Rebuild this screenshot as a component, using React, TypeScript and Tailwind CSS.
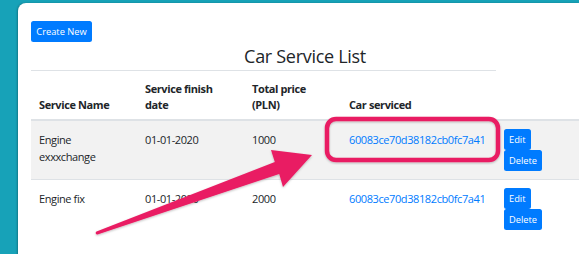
import React from "react";

const Btn = ({ children, className = "" }: { children: React.ReactNode; className?: string }) => (
  <button
    className={
      "block h-[21px] px-[5px] bg-[#007bff] text-white text-[9.3px] leading-[21px] rounded-[2.5px] " +
      className
    }
  >
    {children}
  </button>
);

const rows = [
  { name: "Engine exxxchange", date: "01-01-2020", price: "1000", car: "60083ce70d38182cb0fc7a41", striped: true },
  { name: "Engine fix", date: "01-01-2020", price: "2000", car: "60083ce70d38182cb0fc7a41", striped: false },
];

export default function App() {
  return (
    <div className="relative w-[579px] h-[254px] overflow-hidden bg-[#17a2b8] pl-[18px] pt-[3px] font-['Open_Sans',sans-serif] text-[#212529]">
      <div className="h-[260px] bg-white rounded-tl-[8px] pl-[13px] pt-[18px] shadow-[-1px_0_2px_rgba(0,0,0,0.25)]">
        <Btn className="w-[61px] px-0">Create New</Btn>
        <div className="w-[548px]">
          <div className="mt-[2px] text-center text-[18px] leading-[24px] mb-[2px] tracking-[-0.3px]">Car Service List</div>
          <table className="w-[548px] table-fixed border-collapse text-[11px] tracking-[-0.4px]">
            <colgroup>
              <col className="w-[106px]" />
              <col className="w-[107px]" />
              <col className="w-[97px]" />
              <col className="w-[155px]" />
              <col className="w-[83px]" />
            </colgroup>
            <thead>
              <tr>
                {["Service Name", "Service finish date", "Total price (PLN)", "Car serviced"].map((h) => (
                  <th
                    key={h}
                    className="border-t border-t-[#dee2e6] border-b-2 border-b-[#dee2e6] px-2 pt-[10px] pb-[6px] align-bottom text-left font-bold leading-[16px]"
                  >
                    {h}
                  </th>
                ))}
                <th className="border-b-2 border-b-[#dee2e6]"></th>
              </tr>
            </thead>
            <tbody>
              {rows.map((r, i) => (
                <tr key={i} className={r.striped ? "bg-[#f2f2f2]" : "bg-white"}>
                  <td className="h-[59px] border-t border-[#dee2e6] px-2 pt-[10px] align-top leading-[17px]">{r.name}</td>
                  <td className="border-t border-[#dee2e6] px-2 pt-[10px] align-top leading-[17px]">{r.date}</td>
                  <td className="border-t border-[#dee2e6] px-2 pt-[10px] align-top leading-[17px]">{r.price}</td>
                  <td className="border-t border-[#dee2e6] px-2 pt-[10px] align-top leading-[17px]">
                    <a className="text-[#007bff]">{r.car}</a>
                  </td>
                  <td className="border-t border-[#dee2e6] px-2 pt-2 align-top tracking-normal">
                    <div className="h-[42px]">
                      <Btn>Edit</Btn>
                      <Btn>Delete</Btn>
                    </div>
                  </td>
                </tr>
              ))}
            </tbody>
          </table>
        </div>
      </div>
      <svg className="absolute left-0 top-0 pointer-events-none" width="579" height="254" viewBox="0 0 579 254">
        <defs>
          <filter id="sh" x="-10%" y="-10%" width="120%" height="120%">
            <feDropShadow dx="0" dy="1" stdDeviation="0.8" floodColor="#000" floodOpacity="0.25" />
          </filter>
        </defs>
        <rect x="327" y="119" width="171" height="41" rx="9" fill="none" stroke="#e91e63" strokeWidth="4.5" filter="url(#sh)" />
        <path
          d="M96.5,231.6 L274.8,161.9 L271,150 L312,155 L283,187 L279.2,174.1 L97.5,234.4 A1.5,1.5 0 0 1 96.5,231.6 Z"
          fill="#e91e63"
          filter="url(#sh)"
        />
      </svg>
    </div>
  );
}
